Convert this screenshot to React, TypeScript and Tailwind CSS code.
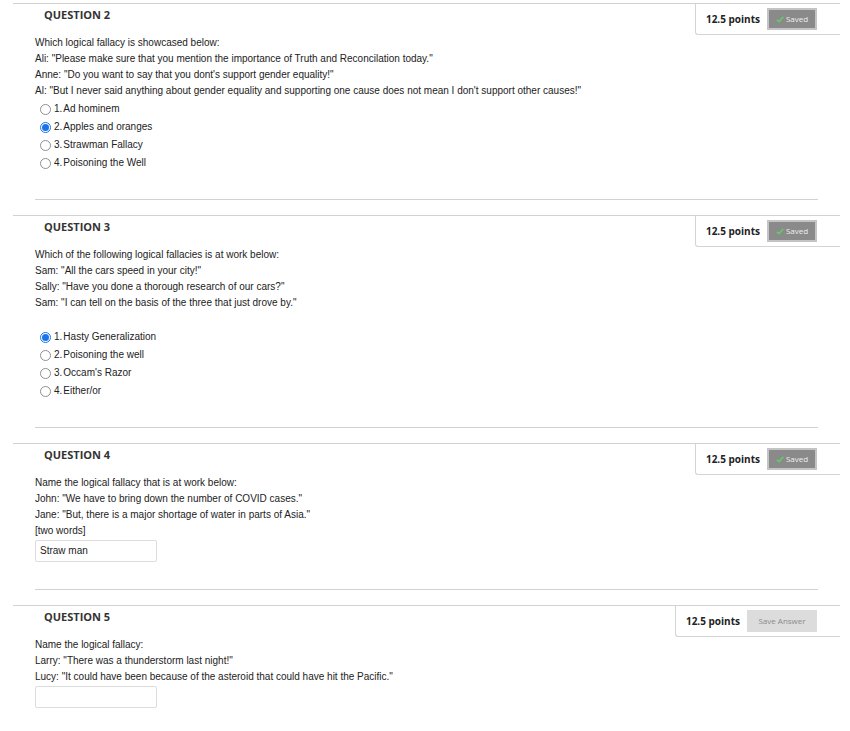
import React from 'react'

type Q = {
  num: number
  lines: string[]
  options?: string[]
  selected?: number
  gap?: boolean
  answer?: string
  saved: boolean
}

const questions: Q[] = [
  {
    num: 2,
    lines: [
      'Which logical fallacy is showcased below:',
      'Ali: "Please make sure that you mention the importance of Truth and Reconcilation today."',
      'Anne: "Do you want to say that you dont\'s support gender equality!"',
      'Al: "But I never said anything about gender equality and supporting one cause does not mean I don\'t support other causes!"',
    ],
    options: ['Ad hominem', 'Apples and oranges', 'Strawman Fallacy', 'Poisoning the Well'],
    selected: 1,
    saved: true,
  },
  {
    num: 3,
    lines: [
      'Which of the following logical fallacies is at work below:',
      'Sam: "All the cars speed in your city!"',
      'Sally: "Have you done a thorough research of our cars?"',
      'Sam: "I can tell on the basis of the three that just drove by."',
    ],
    gap: true,
    options: ['Hasty Generalization', 'Poisoning the well', "Occam's Razor", 'Either/or'],
    selected: 0,
    saved: true,
  },
  {
    num: 4,
    lines: [
      'Name the logical fallacy that is at work below:',
      'John: "We have to bring down the number of COVID cases."',
      'Jane: "But, there is a major shortage of water in parts of Asia."',
      '[two words]',
    ],
    answer: 'Straw man',
    saved: true,
  },
  {
    num: 5,
    lines: [
      'Name the logical fallacy:',
      'Larry: "There was a thunderstorm last night!"',
      'Lucy: "It could have been because of the asteroid that could have hit the Pacific."',
    ],
    answer: '',
    saved: false,
  },
]

function Radio({ checked }: { checked: boolean }) {
  return checked ? (
    <span className="w-[11px] h-[11px] rounded-full border border-[#1a73e8] bg-white flex items-center justify-center shrink-0">
      <span className="w-[7px] h-[7px] rounded-full bg-[#1a73e8]" />
    </span>
  ) : (
    <span className="w-[11px] h-[11px] rounded-full border border-[#8f8f8f] bg-white shrink-0" />
  )
}

function PointsBox({ saved }: { saved: boolean }) {
  return (
    <div className="h-[31px] flex items-center gap-[7px] pl-[10px] pr-[23px] border-l border-b border-[#d4d4d4] rounded-bl-[3px]">
      <span className="text-[10px] font-bold text-[#222] font-['Open_Sans',sans-serif]">12.5 points</span>
      {saved ? (
        <span className="w-[50px] h-[22px] bg-[#8a8a8a] border-2 border-[#c4c4c4] flex items-center justify-center gap-[2px] text-[8px] text-[#eee] font-['Open_Sans',sans-serif]">
          <svg width="8" height="7" viewBox="0 0 8 7">
            <path d="M0.8 3.8 L3 5.8 L7.2 1" stroke="#5fd35f" strokeWidth="1.5" fill="none" />
          </svg>
          Saved
        </span>
      ) : (
        <span className="w-[70px] h-[22px] bg-[#dcdcdc] flex items-center justify-center text-[8px] text-[#8a8a8a] font-['Open_Sans',sans-serif]">
          Save Answer
        </span>
      )}
    </div>
  )
}

function Question({ q, last }: { q: Q; last: boolean }) {
  return (
    <div className="border-t border-[#d2d2d2] mb-[15px]">
      <div className="flex justify-between items-start h-[31px]">
        <h2 className="ml-[31px] pt-[4px] text-[11px] leading-[14px] font-bold text-[#333] font-['Open_Sans',sans-serif]">
          QUESTION {q.num}
        </h2>
        <PointsBox saved={q.saved} />
      </div>
      <div className="ml-[22px] mr-[22px] text-[10px] leading-[16px] text-[#222] font-['Liberation_Sans',Arial,sans-serif]">
        {q.lines.map((l) => (
          <p key={l}>{l}</p>
        ))}
        {q.gap && <div className="h-[16px]" />}
        {q.options && (
          <div className="mt-[1px]">
            {q.options.map((o, i) => (
              <div key={o} className="h-[18px] flex items-center ml-[5px]">
                <Radio checked={q.selected === i} />
                <span className="ml-[3px]">{i + 1}.</span>
                <span className="ml-[1px]">{o}</span>
              </div>
            ))}
          </div>
        )}
        {q.answer !== undefined && (
          <div className="mt-[1px] w-[122px] h-[22px] border border-[#dcdcdc] rounded-[2px] px-[4px] flex items-center">
            {q.answer}
          </div>
        )}
        {!last && <div className="mt-[27px] border-t border-[#d2d2d2]" />}
      </div>
    </div>
  )
}

export default function App() {
  return (
    <div className="w-[850px] h-[731px] bg-white overflow-hidden pt-[3px] pl-[13px]">
      <div className="w-[827px]">
        {questions.map((q, i) => (
          <Question key={q.num} q={q} last={i === questions.length - 1} />
        ))}
      </div>
    </div>
  )
}
